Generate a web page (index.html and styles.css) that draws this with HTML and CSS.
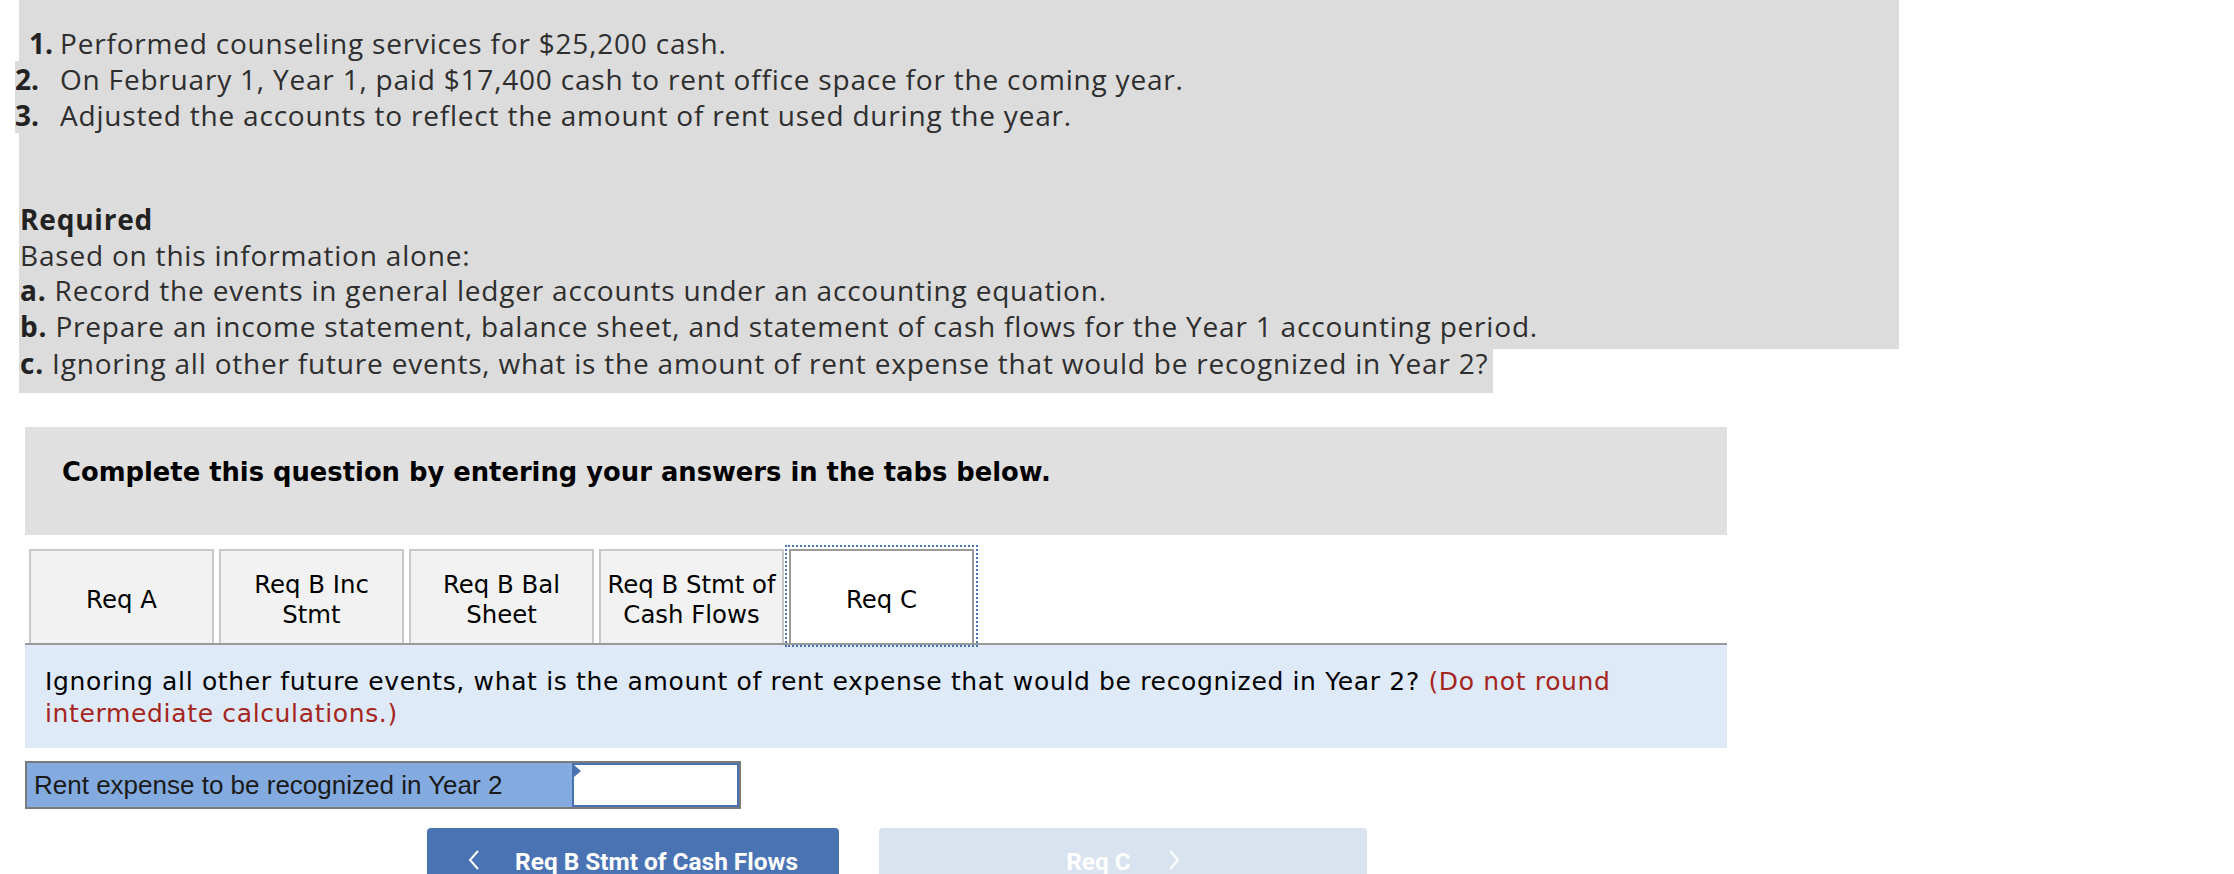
FILE: index.html
```html
<!DOCTYPE html>
<html lang="en">
<head>
<meta charset="utf-8">
<title>Req C</title>
<link rel="stylesheet" href="styles.css">
</head>
<body>
<div class="intro">
  <div class="intro-main">
    <div class="event event-first"><span class="num">1.</span><span>Performed counseling services for $25,200 cash.</span></div>
    <div class="event"><span class="num">2.</span><span>On February 1, Year 1, paid $17,400 cash to rent office space for the coming year.</span></div>
    <div class="event"><span class="num">3.</span><span>Adjusted the accounts to reflect the amount of rent used during the year.</span></div>
    <div class="required">
      <div class="req-title">Required</div>
      <div>Based on this information alone:</div>
      <div><b>a.</b> Record the events in general ledger accounts under an accounting equation.</div>
      <div><b>b.</b> Prepare an income statement, balance sheet, and statement of cash flows for the Year 1 accounting period.</div>
    </div>
  </div>
  <div class="intro-last"><span><b>c.</b> Ignoring all other future events, what is the amount of rent expense that would be recognized in Year 2?</span></div>
</div>

<div class="task">
  <div class="banner">Complete this question by entering your answers in the tabs below.</div>

  <div class="tabs">
    <div class="tab">Req A</div>
    <div class="tab">Req B Inc Stmt</div>
    <div class="tab">Req B Bal Sheet</div>
    <div class="tab">Req B Stmt of Cash Flows</div>
    <div class="tab tab-active">Req C</div>
  </div>

  <div class="question">Ignoring all other future events, what is the amount of rent expense that would be recognized in Year 2? <span class="note">(Do not round </span><span class="note">intermediate calculations.)</span></div>

  <div class="answer-row">
    <div class="answer-label">Rent expense to be recognized in Year 2</div>
    <div class="answer-input"></div>
  </div>

  <div class="nav">
    <div class="btn btn-prev">
      <svg class="chev" width="12" height="20" viewBox="0 0 12 20"><polyline points="10,1 2,10 10,19" fill="none" stroke="#fff" stroke-width="2"/></svg>
      <span>Req B Stmt of Cash Flows</span>
    </div>
    <div class="btn btn-next">
      <span>Req C</span>
      <svg class="chev" width="12" height="20" viewBox="0 0 12 20"><polyline points="2,1 10,10 2,19" fill="none" stroke="#fff" stroke-width="2"/></svg>
    </div>
  </div>
</div>
</body>
</html>
```

FILE: styles.css
```css
html, body {
  margin: 0;
  padding: 0;
  background: #ffffff;
}

body {
  width: 2234px;
  height: 874px;
  overflow: hidden;
  font-family: "DejaVu Sans", Verdana, sans-serif;
}

/* ---------- intro (selected text) ---------- */
.intro {
  font-family: "Open Sans", Lato, sans-serif;
  font-size: 28px;
  letter-spacing: 0.8px;
  color: #2e2e2e;
}

.intro-main {
  margin-left: 19px;
  width: 1880px;
  box-sizing: border-box;
  background: #dcdcdc;
  padding: 25px 0 5px 1px;
}

.event {
  display: flex;
  line-height: 36px;
  margin-left: -5px;
  background: #dcdcdc;
}

.event-first {
  margin-left: 0;
}

.num {
  flex: 0 0 45px;
  box-sizing: border-box;
  font-weight: 700;
  color: #222;
  letter-spacing: 0;
}

.event-first .num {
  flex-basis: 40px;
  padding-left: 9px;
}

.required {
  margin-top: 69px;
  line-height: 35.5px;
}

.required b,
.intro-last b,
.req-title {
  font-weight: 700;
  color: #222;
}

.intro-last {
  margin-top: -3.5px;
  margin-left: 19px;
  line-height: 35.5px;
}

.intro-last span {
  display: inline-block;
  background: #dcdcdc;
  padding: 0 5px 12px 1px;
}

/* ---------- task area ---------- */
.task {
  margin-left: 25px;
  width: 1702px;
}

.banner {
  margin-top: 34px;
  height: 108px;
  box-sizing: border-box;
  background: #e0e0e0;
  display: flex;
  align-items: center;
  padding: 0 0 18px 37px;
  font-weight: 700;
  font-size: 25.8px;
  color: #000;
}

.tabs {
  margin-top: 14px;
  display: flex;
  gap: 5px;
  padding-left: 4px;
  height: 94px;
  border-bottom: 2px solid #9a9a9a;
}

.tab {
  width: 185px;
  box-sizing: border-box;
  border: 2px solid #c8c8c8;
  border-bottom: 0;
  background: #f2f2f2;
  display: flex;
  align-items: center;
  justify-content: center;
  text-align: center;
  font-size: 24.4px;
  line-height: 30px;
  padding: 6px 5px 0;
  color: #000;
}

.tab-active {
  background: #fff;
  border-color: #9a9a9a;
  outline: 2px dotted #4a72b2;
  outline-offset: 2px;
}

.question {
  background: #deeaf7;
  padding: 21px 90px 18px 20px;
  font-size: 25px;
  letter-spacing: 0.65px;
  line-height: 32px;
  color: #000;
}

.note {
  color: #a52521;
}

.answer-row {
  margin-top: 13px;
  width: 716px;
  height: 48px;
  box-sizing: border-box;
  border: 2px solid #7a7a7a;
  display: flex;
}

.answer-label {
  width: 545px;
  box-sizing: border-box;
  background: #84abdf;
  font-family: "Liberation Sans", Arial, sans-serif;
  font-size: 26px;
  color: #1a1a1a;
  display: flex;
  align-items: center;
  padding-left: 7px;
}

.answer-input {
  flex: 1;
  position: relative;
  border: 2px solid #4a72b2;
  background: #fff;
}

.answer-input::before {
  content: "";
  position: absolute;
  top: 0;
  left: 0;
  border-left: 7px solid #4a72b2;
  border-top: 6px solid transparent;
  border-bottom: 6px solid transparent;
}

.nav {
  margin-top: 19px;
  padding-left: 402px;
  display: flex;
  gap: 40px;
}

.btn {
  height: 60px;
  box-sizing: border-box;
  border-radius: 4px;
  display: flex;
  justify-content: center;
  align-items: flex-start;
  padding-top: 19px;
  font-family: Roboto, "Liberation Sans", sans-serif;
  font-weight: 700;
  font-size: 24.4px;
  color: #fff;
  gap: 35px;
}

.btn-prev {
  width: 412px;
  background: #4a73b3;
}

.btn-next {
  width: 488px;
  background: #d9e3ef;
  gap: 37px;
}

.chev {
  margin-top: 3px;
}
```
